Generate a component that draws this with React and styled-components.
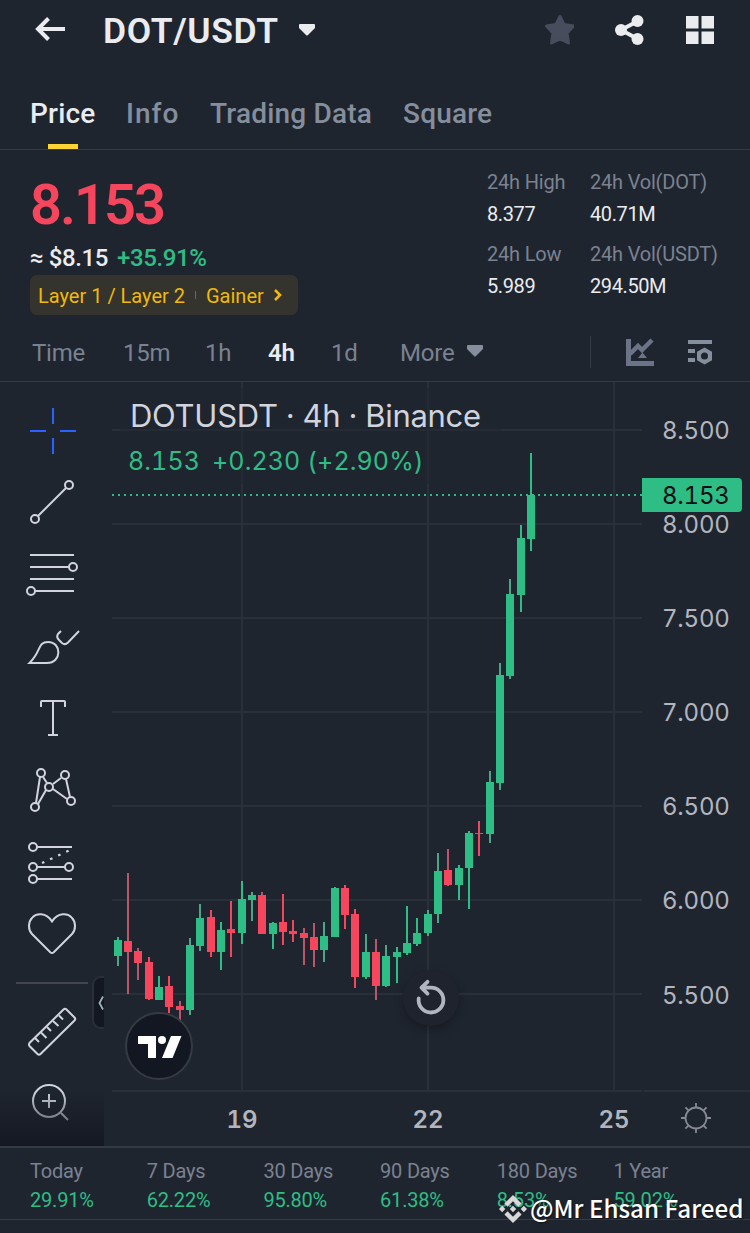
import React from "react";
import styled, { createGlobalStyle } from "styled-components";
import { SiBinance } from "react-icons/si";

const tabs = [
  { name: "Price", width: 96, active: true },
  { name: "Info", width: 84, spacing: 1 },
  { name: "Trading Data", width: 193 },
  { name: "Square", width: 100 },
];

const stats = [
  { label: "24h High", value: "8.377" },
  { label: "24h Vol(DOT)", value: "40.71M" },
  { label: "24h Low", value: "5.989" },
  { label: "24h Vol(USDT)", value: "294.50M" },
];

const intervals = [
  { name: "Time", width: 91 },
  { name: "15m", width: 82 },
  { name: "1h", width: 63 },
  { name: "4h", width: 63, active: true },
  { name: "1d", width: 69 },
];

const prices = ["8.500", "8.000", "7.500", "7.000", "6.500", "6.000", "5.500"];
const dates = ["19", "22", "25"];

const performance = [
  { label: "Today", value: "29.91%" },
  { label: "7 Days", value: "62.22%" },
  { label: "30 Days", value: "95.80%" },
  { label: "90 Days", value: "61.38%" },
  { label: "180 Days", value: "8.53%" },
  { label: "1 Year", value: "59.02%" },
];

// x, high, body top, body bottom, low, up, soft wick
const candles = [
  [118, 937, 940, 956, 966, 1, 1],
  [128, 873, 941, 952, 994, 0, 1],
  [138, 948, 951, 963, 980, 0, 1],
  [149, 957, 962, 999, 1000, 0, 0],
  [159, 976, 987, 1000, 1000, 1, 0],
  [169, 976, 986, 1007, 1013, 0, 0],
  [180, 1001, 1006, 1010, 1022, 0, 1],
  [190, 938, 945, 1010, 1015, 1, 1],
  [200, 904, 918, 946, 951, 1, 1],
  [211, 910, 917, 952, 957, 0, 0],
  [221, 922, 930, 952, 970, 1, 0],
  [231, 901, 929, 933, 957, 0, 0],
  [242, 881, 899, 933, 944, 1, 0],
  [252, 892, 895, 900, 921, 1, 1],
  [262, 892, 895, 934, 934, 0, 1],
  [273, 922, 923, 934, 949, 1, 0],
  [283, 894, 922, 932, 945, 0, 0],
  [293, 920, 931, 934, 942, 0, 0],
  [304, 928, 933, 938, 965, 0, 1],
  [314, 923, 937, 950, 967, 0, 1],
  [324, 922, 936, 950, 962, 1, 1],
  [335, 887, 888, 937, 937, 1, 0],
  [345, 885, 888, 915, 929, 0, 0],
  [355, 909, 914, 977, 988, 0, 0],
  [366, 934, 952, 977, 979, 1, 1],
  [376, 939, 952, 986, 1000, 0, 1],
  [386, 945, 956, 986, 987, 1, 1],
  [397, 947, 952, 957, 983, 1, 0],
  [407, 906, 943, 953, 955, 1, 0],
  [417, 918, 933, 944, 946, 1, 0],
  [428, 910, 914, 933, 936, 1, 1],
  [438, 853, 871, 914, 923, 1, 1],
  [448, 849, 870, 885, 886, 0, 1],
  [459, 865, 868, 885, 900, 1, 0],
  [469, 831, 833, 868, 909, 1, 0],
  [479, 821, 833, 834, 856, 0, 0],
  [490, 771, 782, 834, 843, 1, 1],
  [500, 663, 675, 783, 790, 1, 1],
  [510, 579, 594, 676, 679, 1, 1],
  [521, 525, 538, 595, 612, 1, 0],
  [531, 453, 495, 539, 551, 1, 0],
];

const Node = ({ x, y }) => <circle cx={x} cy={y} r="4" />;

const CrossIcon = () => (
  <ToolIcon viewBox="0 0 104 72" $color="#2962ff">
    <path d="M53 13V29M53 43V59M30 36H46M60 36H76" />
  </ToolIcon>
);

const TrendIcon = () => (
  <ToolIcon viewBox="0 0 104 72">
    <path d="M38 49L66 21" />
    <Node x={35} y={52} />
    <Node x={69} y={18} />
  </ToolIcon>
);

const FibIcon = () => (
  <ToolIcon viewBox="0 0 104 72">
    <path d="M30 16H74M30 28H69M30 40H74M35 52H74" />
    <Node x={73} y={28} />
    <Node x={31} y={52} />
  </ToolIcon>
);

const BrushIcon = () => (
  <ToolIcon viewBox="0 0 104 72">
    <path d="M29.500 52C42 40 37 31 48 31C62 31 62 52 47 52Z" />
    <path d="M61 20L58 23Q56 26 59 29L62 32Q65 34.500 68 31.500L79 20" />
  </ToolIcon>
);

const TextIcon = () => (
  <ToolIcon viewBox="0 0 104 72">
    <path d="M41 24V19Q41 18 42 18H64Q65 18 65 19V24M53 18V52M48 52H58" />
  </ToolIcon>
);

const PatternIcon = () => (
  <ToolIcon viewBox="0 0 104 72">
    <path d="M36 48L40 22M43 22L47 28M46 35L38 49M53 29L61 23M66 24L70 42M53 34L67 44" />
    <Node x={41} y={18} />
    <Node x={65} y={20} />
    <Node x={49} y={32} />
    <Node x={71} y={46} />
    <Node x={35} y={52} />
  </ToolIcon>
);

const ForecastIcon = () => (
  <ToolIcon viewBox="0 0 104 72">
    <path d="M37 20H72M37 40H65M37 52H72" />
    <path d="M42 36L70 23" strokeDasharray="2.6 6.3" strokeWidth="2.2" />
    <Node x={33} y={20} />
    <Node x={33} y={40} />
    <Node x={69} y={40} />
    <Node x={33} y={52} />
  </ToolIcon>
);

const HeartIcon = () => (
  <ToolIcon viewBox="0 0 104 72">
    <path d="M52 22.500C46 13 36 14 32 19C28 23 28 31 32 35L50.500 53.500Q52 54.500 53.500 53.500L72 35C76 31 76 23 72 19C68 14 58 13 52 22.500Z" />
  </ToolIcon>
);

const RulerIcon = () => (
  <ToolIcon viewBox="0 0 104 72">
    <path d="M63.500 14.500Q65 13 66.500 14.500L74.500 22.500Q76 24 74.500 25.500L40.500 59Q39 60.500 37.500 59L29.500 51Q28.500 49.500 29.500 48Z" />
    <path d="M35 43L39 47M41 37.500L46.500 43M47 32L51 36M53 26L58.500 31M59 20.500L63 24.500" />
  </ToolIcon>
);

const ZoomIcon = () => (
  <ToolIcon viewBox="0 0 104 72">
    <circle cx="49" cy="34" r="16" />
    <path d="M42 34H56M49 27V41M61 46L68 53" />
  </ToolIcon>
);

const Chart = () => (
  <svg width="530" height="710" viewBox="112 382 530 710">
    <g fill="#2a303a">
      {[430, 524, 618, 712, 806, 900, 994].map((y) => (
        <rect key={y} x="112" y={y - 1} width="530" height="2" />
      ))}
      {[242, 428, 614].map((x) => (
        <rect key={x} x={x - 1} y="382" width="2" height="708" />
      ))}
      <rect x="112" y="1090" width="530" height="2" />
    </g>
    <rect x="120" y="388" width="381" height="96" fill="#1f252f" opacity="0.5" />
    <path
      d="M112 495H642"
      stroke="#2ebd85"
      strokeWidth="2"
      strokeDasharray="2 4"
    />
    {candles.map(([x, high, top, bottom, low, up, soft]) => (
      <g key={x} fill={up ? "#2ebd85" : "#f6465d"}>
        <rect
          x={x - 1}
          y={high}
          width="2"
          height={low - high}
          fill={soft ? (up ? "#4ba685" : "#ba566a") : undefined}
        />
        <rect x={x - 4} y={top} width="8" height={bottom - top} />
      </g>
    ))}
  </svg>
);

const App = () => {
  return (
    <Page>
      <GlobalStyle />
      <Header>
        <svg width="30" height="26" viewBox="0 0 30 26">
          <path
            d="M13.500 1.500L3 12L13.500 22.500M3 12H30"
            fill="none"
            stroke="#eaecef"
            strokeWidth="4"
          />
        </svg>
        <Title>DOT/USDT</Title>
        <Caret viewBox="0 0 16 12" $color="#eaecef">
          <path d="M1 0H15Q16 0 16 1V4L9 11Q8 12 7 11L0 4V1Q0 0 1 0Z" />
        </Caret>
        <HeaderIcons>
          <svg width="30" height="30" viewBox="-1 0 30 30">
            <path
              d="M15 1.500L19 9.500L28.500 11L22 18L23.500 28L15 23.800L6.500 28L8 18L1.500 11L11 9.500Z"
              fill="#474d5c"
              stroke="#474d5c"
              strokeWidth="3"
              strokeLinejoin="round"
            />
          </svg>
          <svg width="30" height="30" viewBox="0 0 30 30" fill="#eaecef">
            <path
              d="M23 6L6 15L23 24"
              fill="none"
              stroke="#eaecef"
              strokeWidth="4"
            />
            <circle cx="22.500" cy="6" r="6" />
            <circle cx="6" cy="15" r="6" />
            <circle cx="22.500" cy="24" r="6" />
          </svg>
          <svg width="28" height="28" viewBox="0 0 28 28" fill="#eaecef">
            <path d="M0 0H12.500V12.500H0ZM15.500 0H28V12.500H15.500ZM0 15.500H12.500V28H0ZM15.500 15.500H28V28H15.500Z" />
          </svg>
        </HeaderIcons>
      </Header>

      <Tabs>
        {tabs.map((tab) => (
          <Tab
            key={tab.name}
            $width={tab.width}
            $active={tab.active}
            $spacing={tab.spacing}
          >
            <span>{tab.name}</span>
          </Tab>
        ))}
      </Tabs>

      <Summary>
        <div>
          <LastPrice>8.153</LastPrice>
          <Change>
            <Approx>≈ $8.15</Approx>
            <Percent>+35.91%</Percent>
          </Change>
          <Tags>
            <TagName $width={157}>Layer 1 / Layer 2</TagName>
            <TagDivider />
            <TagName $width={68}>Gainer</TagName>
            <svg width="8" height="12" viewBox="0 0 8 12">
              <path
                d="M1 1L6 6L1 11"
                fill="none"
                stroke="#f0b90b"
                strokeWidth="2.6"
              />
            </svg>
          </Tags>
        </div>
        <Stats>
          {stats.map((item) => (
            <div key={item.label}>
              <StatLabel>{item.label}</StatLabel>
              <StatValue>{item.value}</StatValue>
            </div>
          ))}
        </Stats>
      </Summary>

      <Intervals>
        {intervals.map((item) => (
          <Interval key={item.name} $width={item.width} $active={item.active}>
            {item.name}
          </Interval>
        ))}
        <Interval $width={66}>More</Interval>
        <Caret viewBox="0 0 16 12" $color="#848e9c">
          <path d="M1 0H15Q16 0 16 1V4L9 11Q8 12 7 11L0 4V1Q0 0 1 0Z" />
        </Caret>
        <IntervalIcons>
          <svg width="28" height="28" viewBox="0 0 28 28" fill="#6b7486">
            <path d="M0 1H5V23H28V28H0Z" />
            <path
              d="M4 16L12 8L16 12L26 2"
              fill="none"
              stroke="#6b7486"
              strokeWidth="4.500"
            />
            <path d="M12 20L16.500 14.500L21 20Z" />
          </svg>
          <svg width="24" height="26" viewBox="0 0 24 26" fill="#848e9c">
            <path d="M0 1H24V5H0ZM0 10H7V14H0ZM0 19H7V23H0Z" />
            <path
              fillRule="evenodd"
              d="M16.500 8.500L24 12.700V21.300L16.500 25.500L9 21.300V12.700ZM16.500 13.500A3.500 3.500 0 1 0 16.500 20.500A3.500 3.500 0 1 0 16.500 13.500Z"
            />
          </svg>
        </IntervalIcons>
      </Intervals>

      <ChartPanel>
        <Toolbar>
          <CrossIcon />
          <TrendIcon />
          <FibIcon />
          <BrushIcon />
          <TextIcon />
          <PatternIcon />
          <ForecastIcon />
          <HeartIcon />
          <ToolDivider />
          <RulerIcon />
          <ZoomIcon />
          <ToolFade />
          <Handle>
            <svg width="6" height="16" viewBox="0 0 6 16">
              <path
                d="M5 1.500L1.500 8L5 14.500"
                fill="none"
                stroke="#9db2bd"
                strokeWidth="1.800"
              />
            </svg>
          </Handle>
        </Toolbar>

        <Plot>
          <PlotRow>
            <Canvas>
              <Chart />
              <Legend>
                <Symbol>DOTUSDT · 4h · Binance</Symbol>
                <LegendValues>
                  <span>8.153</span>
                  <span>+0.230 (+2.90%)</span>
                </LegendValues>
              </Legend>
              <Logo>
                <svg width="44" height="22" viewBox="0 0 44 22" fill="#fff">
                  <path d="M0 0H18V22H10V8H0ZM33 0H43.500L34.500 22H24Z" />
                  <circle cx="24" cy="4" r="4" />
                </svg>
              </Logo>
              <Reset>
                <svg width="56" height="56" viewBox="403 970 56 56">
                  <path
                    d="M418.700 998.500A12.400 12.400 0 1 0 431 987.700H422M427.500 981.800L421.500 987.700L427.500 993.600"
                    fill="none"
                    stroke="#b2b5be"
                    strokeWidth="3.800"
                    strokeLinejoin="round"
                    strokeLinecap="round"
                  />
                </svg>
              </Reset>
            </Canvas>
            <PriceAxis>
              {prices.map((price) => (
                <PriceLabel key={price}>{price}</PriceLabel>
              ))}
              <PriceTag>8.153</PriceTag>
            </PriceAxis>
          </PlotRow>
          <TimeAxis>
            {dates.map((date) => (
              <DateLabel key={date}>{date}</DateLabel>
            ))}
            <svg width="30" height="30" viewBox="-15 -15 30 30">
              <g fill="none" stroke="#868993" strokeWidth="1.800">
                <circle r="10.500" />
                <path d="M0 -15V-11M0 11V15M-15 0H-11M11 0H15M-10.600 -10.600L-7.600 -7.600M10.600 -10.600L7.600 -7.600M-10.600 10.600L-7.600 7.600M10.600 10.600L7.600 7.600" />
              </g>
            </svg>
          </TimeAxis>
        </Plot>
      </ChartPanel>

      <Performance>
        {performance.map((item) => (
          <div key={item.label}>
            <PerfLabel>{item.label}</PerfLabel>
            <PerfValue>{item.value}</PerfValue>
          </div>
        ))}
      </Performance>

      <Watermark>
        <SiBinance size={28} color="#d8d8d8" />
        <span>@Mr Ehsan Fareed</span>
      </Watermark>
    </Page>
  );
};

const GlobalStyle = createGlobalStyle`
  * {
    box-sizing: border-box;
  }
  body {
    margin: 0;
    background-color: #1f252f;
    overflow: hidden;
  }
  svg {
    display: block;
    flex-shrink: 0;
  }
`;

const Page = styled.div`
  position: relative;
  width: 750px;
  height: 1233px;
  overflow: hidden;
  background-color: #1f252f;
  color: #eaecef;
  font-family: Roboto, sans-serif;
  white-space: nowrap;
`;

const Header = styled.header`
  display: flex;
  align-items: center;
  height: 60px;
  padding: 0 36px 0 35px;
`;

const Title = styled.h1`
  width: 175px;
  margin: 0 20px 0 38px;
  padding-top: 2px;
  font-size: 35.5px;
  line-height: 58px;
  font-weight: 600;
  letter-spacing: 0.6px;
`;

const Caret = styled.svg`
  width: 16px;
  height: 12px;
  margin-bottom: 1px;
  margin-left: 1px;
  fill: ${(props) => props.$color};
`;

const HeaderIcons = styled.div`
  display: flex;
  align-items: center;
  margin-left: auto;
  gap: 41px;
`;

const Tabs = styled.nav`
  display: flex;
  height: 90px;
  padding: 30px 0 0 30px;
  border-bottom: 1px solid #333b47;
`;

const Tab = styled.div`
  width: ${(props) => props.$width}px;
  color: ${(props) => (props.$active ? "#eaecef" : "#848e9c")};
  font-size: 28px;
  font-weight: 500;
  line-height: 48px;
  letter-spacing: ${(props) => props.$spacing || 0.2}px;
  span {
    display: block;
    height: 54px;
  }
  &::after {
    content: "";
    display: ${(props) => (props.$active ? "block" : "none")};
    width: 30px;
    height: 5px;
    margin-left: 18px;
    background-color: #fcd535;
  }
`;

const Summary = styled.section`
  display: flex;
  justify-content: space-between;
  height: 172px;
  padding: 17px 31px 0 30px;
`;

const LastPrice = styled.div`
  height: 74px;
  color: #f6465d;
  font-size: 56px;
  font-weight: 600;
  line-height: 76px;
  letter-spacing: -2px;
`;

const Change = styled.div`
  display: flex;
  height: 34px;
  font-size: 24px;
  font-weight: 500;
  line-height: 34px;
  letter-spacing: -0.4px;
`;

const Approx = styled.span`
  width: 87px;
`;

const Percent = styled.span`
  color: #2ebd85;
`;

const Tags = styled.div`
  display: flex;
  align-items: center;
  width: 268px;
  height: 40px;
  padding-left: 8px;
  border-radius: 7px;
  background-color: #35332d;
`;

const TagName = styled.span`
  width: ${(props) => props.$width}px;
  padding-top: 2px;
  color: #f0b90b;
  font-size: 20px;
`;

const TagDivider = styled.span`
  width: 1px;
  height: 8px;
  margin-right: 10px;
  background-color: #806a1c;
`;

const Stats = styled.div`
  display: grid;
  grid-template-columns: 103px 130px;
  grid-auto-rows: 72px;
  margin-right: -1px;
`;

const StatLabel = styled.div`
  color: #7a8291;
  font-size: 20px;
  line-height: 30px;
  letter-spacing: -0.2px;
`;

const StatValue = styled.div`
  font-size: 20px;
  line-height: 34px;
  letter-spacing: -0.4px;
`;

const Intervals = styled.div`
  display: flex;
  align-items: center;
  height: 60px;
  padding: 0 38px 0 32px;
  border-bottom: 1px solid #333b47;
`;

const Interval = styled.span`
  width: ${(props) => props.$width}px;
  padding-top: 2px;
  color: ${(props) => (props.$active ? "#eaecef" : "#7a8291")};
  font-size: 24px;
  font-weight: ${(props) => (props.$active ? 600 : 400)};
  line-height: 30px;
  letter-spacing: -0.2px;
`;

const IntervalIcons = styled.div`
  display: flex;
  align-items: center;
  gap: 34px;
  height: 32px;
  margin-left: auto;
  padding-left: 35px;
  border-left: 1px solid #333b47;
`;

const ChartPanel = styled.section`
  display: flex;
  height: 766px;
  border-bottom: 2px solid #333a46;
`;

const Toolbar = styled.aside`
  position: relative;
  width: 104px;
  height: 764px;
  padding-top: 13px;
`;

const ToolIcon = styled.svg`
  width: 104px;
  height: 72px;
  fill: none;
  stroke: ${(props) => props.$color || "#d1d4dc"};
  stroke-width: 2;
`;

const ToolDivider = styled.div`
  width: 72px;
  height: 2px;
  margin: 11px 16px;
  background-color: #434651;
`;

const ToolFade = styled.div`
  position: absolute;
  left: 0;
  bottom: 0;
  width: 104px;
  height: 56px;
  background: linear-gradient(rgba(19, 23, 34, 0), rgba(19, 23, 34, 0.9));
`;

const Handle = styled.div`
  position: absolute;
  top: 594px;
  right: 0;
  display: flex;
  align-items: center;
  justify-content: flex-end;
  width: 12px;
  height: 53px;
  border: 2px solid #2a2e39;
  border-right: none;
  border-radius: 9px 0 0 9px;
  background-color: #131722;
`;

const Plot = styled.div`
  width: 638px;
  margin-left: 8px;
  font-family: Inter, sans-serif;
  font-variant-numeric: tabular-nums;
`;

const PlotRow = styled.div`
  display: flex;
  height: 710px;
`;

const Canvas = styled.div`
  position: relative;
  width: 530px;
`;

const Legend = styled.div`
  position: absolute;
  top: 10px;
  left: 18px;
`;

const Symbol = styled.div`
  color: #d1d4dc;
  font-size: 31px;
  line-height: 48px;
  letter-spacing: -0.27px;
`;

const LegendValues = styled.div`
  display: flex;
  gap: 12px;
  margin-left: -2px;
  color: #2ebd85;
  font-size: 25px;
  line-height: 42px;
  letter-spacing: 0.1px;
`;

const Logo = styled.div`
  position: absolute;
  top: 630px;
  left: 13px;
  display: flex;
  align-items: center;
  justify-content: center;
  width: 68px;
  height: 68px;
  padding: 2px 0 0 2px;
  border: 2px solid #363a45;
  border-radius: 50%;
  background-color: #131722;
`;

const Reset = styled.div`
  position: absolute;
  top: 588px;
  left: 291px;
  width: 56px;
  height: 56px;
  border-radius: 50%;
  background-color: #1f232d;
  box-shadow: 0 4px 8px rgba(10, 12, 18, 0.4);
`;

const PriceAxis = styled.div`
  position: relative;
  width: 108px;
  border-bottom: 2px solid #2a303a;
  border-left: 2px solid #1f252f;
  padding: 1px 0 0 18px;
`;

const PriceLabel = styled.div`
  height: 94.1px;
  color: #b2b5be;
  font-size: 24px;
  line-height: 95px;
  letter-spacing: -0.2px;
`;

const PriceTag = styled.div`
  position: absolute;
  top: 96px;
  left: -2px;
  width: 100px;
  height: 34px;
  padding-left: 20px;
  border-radius: 0 4px 4px 0;
  background-color: #2ebd85;
  color: #0c0e15;
  font-size: 24px;
  line-height: 35px;
  letter-spacing: -0.2px;
`;

const TimeAxis = styled.div`
  display: flex;
  align-items: center;
  height: 54px;
  padding-left: 37px;
  svg {
    margin-left: -26px;
    margin-bottom: 2px;
  }
`;

const DateLabel = styled.div`
  width: 186px;
  color: #b2b5be;
  font-size: 24px;
  font-weight: 600;
  text-align: center;
`;

const Performance = styled.section`
  display: grid;
  grid-template-columns: repeat(6, 116.7px);
  height: 72px;
  padding: 8px 0 0 30px;
  border-bottom: 1px solid #333b47;
`;

const PerfLabel = styled.div`
  color: #7a8291;
  font-size: 20px;
  line-height: 31px;
  letter-spacing: -0.2px;
`;

const PerfValue = styled.div`
  color: #2ebd85;
  font-size: 20px;
  line-height: 26px;
  letter-spacing: -0.2px;
`;

const Watermark = styled.div`
  position: absolute;
  top: 1189px;
  left: 499px;
  display: flex;
  align-items: center;
  gap: 3px;
  height: 40px;
  color: #fff;
  font-family: "Noto Sans CJK SC", sans-serif;
  font-size: 24.2px;
  font-weight: 500;
  text-shadow: 1px 1px 2px rgba(0, 0, 0, 0.6);
  span {
    padding-bottom: 4px;
  }
`;

export default App;
